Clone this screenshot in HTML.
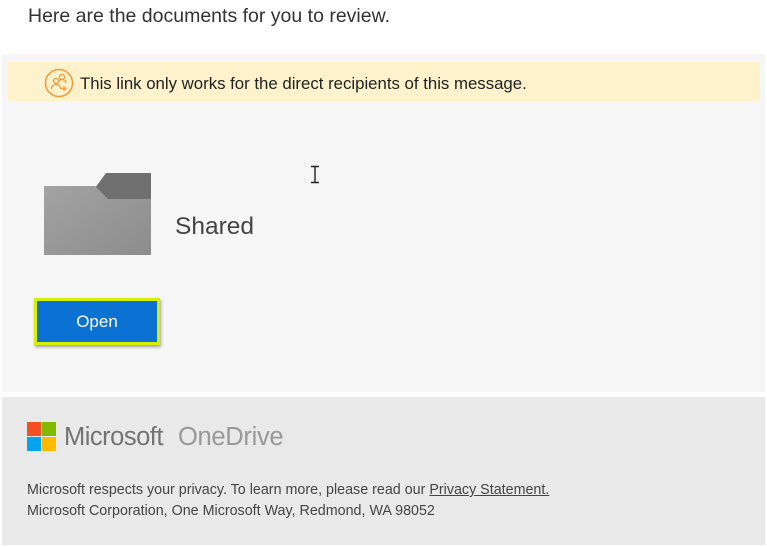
<!DOCTYPE html>
<html><head><meta charset="utf-8"><style>
body{margin:0;width:767px;height:547px;background:#fff;position:relative;overflow:hidden;font-family:"Liberation Sans",sans-serif;}
.a{position:absolute;}
</style></head><body>
<div class="a" style="left:28px;top:5px;font-size:19.5px;color:#333;">Here are the documents for you to review.</div>
<div class="a" style="left:2px;top:54px;width:763px;height:338px;background:#f6f6f6;"></div>
<div class="a" style="left:8px;top:62px;width:752px;height:39px;background:#fdf2cb;"></div>
<svg class="a" style="left:44px;top:68px" width="30" height="30" viewBox="0 0 30 30">
<circle cx="15" cy="15" r="13.5" fill="none" stroke="#f39a36" stroke-width="1.5"/>
<circle cx="18" cy="9" r="2.5" fill="none" stroke="#f39a36" stroke-width="1.3"/>
<circle cx="12" cy="13" r="2.5" fill="none" stroke="#f39a36" stroke-width="1.3"/>
<path d="M7.5 21c0-3 2-4.5 4.5-4.5s4.5 1.5 4.5 4.5M15 12.5c1-.6 2-1 3-1 2.5 0 4 1.5 4 4M20 18v5M17.5 20.5h5" fill="none" stroke="#f39a36" stroke-width="1.3"/>
</svg>
<div class="a" style="left:80px;top:74px;font-size:16.8px;color:#222;">This link only works for the direct recipients of this message.</div>
<svg class="a" style="left:308px;top:165px" width="14" height="20"><path d="M3 1.5h8M7 1.5v16M3 17.5h8" stroke="#222" stroke-width="1.4" fill="none"/></svg>
<svg class="a" style="left:44px;top:173px" width="108" height="82">
<defs><linearGradient id="g" x1="0" y1="0" x2="1" y2="1"><stop offset="0" stop-color="#a3a3a3"/><stop offset="1" stop-color="#8c8c8c"/></linearGradient></defs>
<path d="M62 0H107V26H62L51 15Z" fill="#6f6f6f"/>
<path d="M0 13H51L64 26H107V82H0Z" fill="url(#g)"/>
</svg>
<div class="a" style="left:175px;top:213px;font-size:24.5px;color:#444;">Shared</div>
<div class="a" style="left:34px;top:298px;width:120px;height:41px;border:3px solid #d6f000;background:#0b72d3;box-shadow:1px 2px 3px rgba(0,0,0,.35);"></div>
<div class="a" style="left:37px;top:312px;width:120px;text-align:center;font-size:17px;color:#fff;">Open</div>
<div class="a" style="left:2px;top:397px;width:763px;height:148px;background:#e9e9e9;"></div>
<div class="a" style="left:27px;top:422px;width:14px;height:14px;background:#f25022;"></div>
<div class="a" style="left:42px;top:422px;width:14px;height:14px;background:#7fba00;"></div>
<div class="a" style="left:27px;top:437px;width:14px;height:14px;background:#00a4ef;"></div>
<div class="a" style="left:42px;top:437px;width:14px;height:14px;background:#ffb900;"></div>
<div class="a" style="left:64px;top:423px;font-size:25.5px;color:#737373;letter-spacing:-0.5px;">Microsoft</div>
<div class="a" style="left:178px;top:423px;font-size:25.5px;color:#999;letter-spacing:-0.3px;">OneDrive</div>
<div class="a" style="left:27px;top:480px;font-size:14.3px;color:#444;line-height:21px;">Microsoft respects your privacy. To learn more, please read our <span style="text-decoration:underline">Privacy Statement.</span><br>Microsoft Corporation, One Microsoft Way, Redmond, WA 98052</div>
</body></html>
